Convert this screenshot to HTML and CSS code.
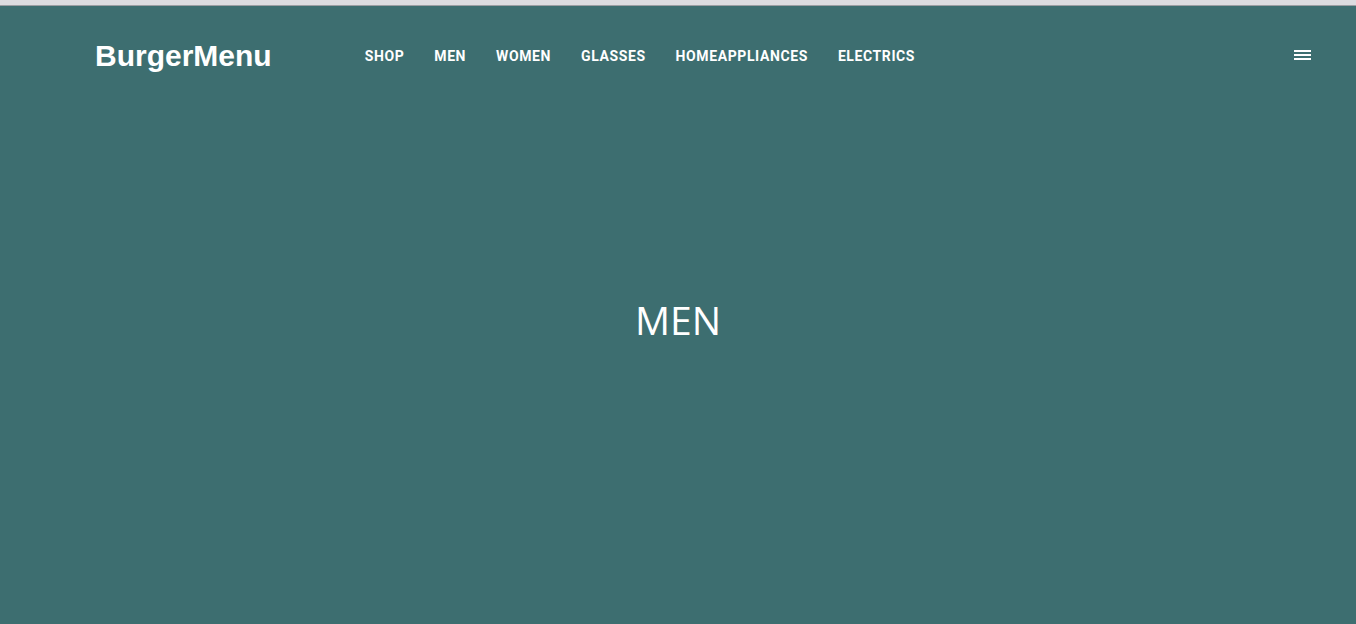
FILE: index.html
```html
<!DOCTYPE html>
<html lang="en">
<head>
<meta charset="utf-8">
<title>BurgerMenu</title>
<link rel="stylesheet" href="styles.css">
</head>
<body>
<div class="topstrip"></div>
<div class="page">
  <header class="header">
    <a class="logo" href="#">BurgerMenu</a>
    <nav class="nav">
      <a href="#">SHOP</a>
      <a href="#">MEN</a>
      <a href="#">WOMEN</a>
      <a href="#">GLASSES</a>
      <a href="#">HOMEAPPLIANCES</a>
      <a href="#">ELECTRICS</a>
    </nav>
    <button class="burger" aria-label="Menu"><span></span><span></span><span></span></button>
  </header>
  <main class="hero">
    <h1 class="title">MEN</h1>
  </main>
</div>
</body>
</html>
```

FILE: styles.css
```css
html, body {
  margin: 0;
  padding: 0;
  height: 100%;
}
body {
  background: #3d6e70;
  display: flex;
  flex-direction: column;
  overflow: hidden;
}
.topstrip {
  height: 5px;
  background: #dcdce0;
  border-bottom: 1px solid #9c9ea3;
  flex: none;
}
.page {
  flex: 1;
  display: flex;
  flex-direction: column;
}
.header {
  height: 98px;
  display: flex;
  align-items: center;
  padding: 0 45px 0 95px;
}
.logo {
  font-family: "Liberation Sans", Arial, sans-serif;
  font-weight: 700;
  font-size: 30px;
  color: #ffffff;
  text-decoration: none;
  margin-top: 2px;
}
.nav {
  display: flex;
  gap: 30px;
  margin-left: 93px;
  margin-right: auto;
  margin-top: 2px;
}
.nav a {
  font-family: Roboto, "Liberation Sans", sans-serif;
  font-weight: 700;
  font-size: 14px;
  color: #ffffff;
  text-decoration: none;
  letter-spacing: 0.6px;
}
.burger {
  background: none;
  border: 0;
  padding: 0;
  width: 17px;
  display: flex;
  flex-direction: column;
  gap: 2px;
  cursor: pointer;
}
.burger span {
  display: block;
  height: 2px;
  background: #ffffff;
}
.hero {
  flex: 1;
  display: flex;
  justify-content: center;
  padding-top: 189px;
}
.title {
  margin: 0;
  font-family: "Open Sans", sans-serif;
  font-weight: 400;
  font-size: 39px;
  color: #ffffff;
  line-height: normal;
  height: 53px;
}
```
